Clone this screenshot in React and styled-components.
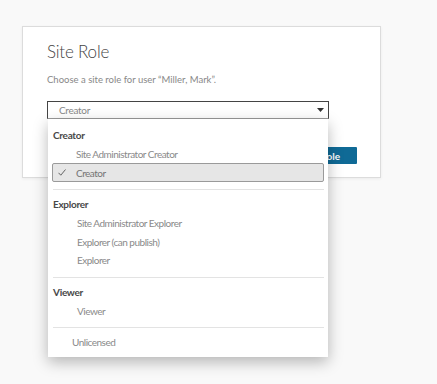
import React from "react";
import styled, { createGlobalStyle } from "styled-components";

const Global = createGlobalStyle`
  html, body { margin: 0; padding: 0; background: #f9f9f9; }
  body { font-family: "Lato", "Noto Sans", sans-serif; }
`;

const Page = styled.div`
  width: 437px;
  height: 384px;
  padding: 26px 0 0 22px;
  box-sizing: border-box;
  background: #f9f9f9;
`;

const Card = styled.div`
  width: 359px;
  height: 152px;
  box-sizing: border-box;
  background: #fff;
  border: 1px solid #dcdcdc;
  box-shadow: 0 1px 3px rgba(0, 0, 0, 0.06);
  padding: 15px 23px 0 24px;
  display: flex;
  flex-direction: column;
`;

const Title = styled.h1`
  margin: 0;
  font-size: 17px;
  line-height: 20px;
  font-weight: 300;
  color: #444;
  letter-spacing: -0.2px;
`;

const Subtitle = styled.p`
  margin: 12px 0 0;
  font-size: 9.5px;
  line-height: 12px;
  color: #888;
`;

const SelectWrap = styled.div`
  position: relative;
  margin-top: 15px;
  width: 282px;
`;

const SelectBox = styled.div`
  height: 18px;
  box-sizing: border-box;
  border: 1px solid #444;
  border-bottom-color: #999;
  display: flex;
  align-items: center;
  justify-content: space-between;
  padding: 0 4px 0 11px;
  font-size: 10px;
  letter-spacing: -0.3px;
  color: #888;
`;

const Menu = styled.div`
  position: absolute;
  top: 100%;
  left: 1px;
  right: 1px;
  background: #fff;
  box-shadow: 0 5px 14px rgba(0, 0, 0, 0.28);
  padding: 7px 4px 5.5px;
  z-index: 2;
`;

const Header = styled.div`
  height: 18.7px;
  display: flex;
  align-items: center;
  padding-left: 1px;
  font-size: 10px;
  font-weight: 700;
  letter-spacing: -0.3px;
  color: #484848;
`;

const Item = styled.div`
  height: 18.7px;
  box-sizing: border-box;
  display: flex;
  align-items: center;
  padding-left: ${(p) => p.$indent}px;
  font-size: 10px;
  letter-spacing: -0.5px;
  color: #8a8a8a;
  border-radius: 2px;
  border: 1px solid ${(p) => (p.$selected ? "#9a9a9a" : "transparent")};
  background: ${(p) => (p.$selected ? "#e6e6e6" : "transparent")};
  ${(p) => p.$selected && "height: 19px; color: #747474;"}
`;

const Check = styled.span`
  width: 18px;
  display: inline-flex;
  align-items: center;
  margin-left: -18px;
`;

const Divider = styled.div`
  height: 1px;
  background: #e3e3e3;
  margin: ${(p) => (p.$first ? "6.5px" : "7px")} 0 5px 1px;
`;

const Footer = styled.div`
  margin-top: 28px;
  display: flex;
  justify-content: flex-end;
`;

const Button = styled.button`
  height: 17px;
  border: none;
  border-radius: 1px;
  background: #0f6a96;
  color: #fff;
  font-family: inherit;
  font-size: 10px;
  font-weight: 700;
  padding: 0 17px 0 14px;
`;

const Arrow = () => (
  <svg width="7" height="4" viewBox="0 0 7 4">
    <path d="M0 0 L7 0 L3.5 4 Z" fill="#333" />
  </svg>
);

const CheckIcon = () => (
  <svg width="8" height="7" viewBox="0 0 8 7">
    <path d="M0.5 3.8 L2.8 6.2 L7.5 0.5" fill="none" stroke="#555" strokeWidth="0.9" />
  </svg>
);

export default function App() {
  return (
    <>
      <Global />
      <Page>
        <Card>
          <Title>Site Role</Title>
          <Subtitle>Choose a site role for user “Miller, Mark”.</Subtitle>
          <SelectWrap>
            <SelectBox>
              <span>Creator</span>
              <Arrow />
            </SelectBox>
            <Menu>
              <Header>Creator</Header>
              <Item $indent={23}>Site Administrator Creator</Item>
              <Item $indent={23} $selected>
                <Check>
                  <CheckIcon />
                </Check>
                Creator
              </Item>
              <Divider $first />
              <Header>Explorer</Header>
              <Item $indent={24}>Site Administrator Explorer</Item>
              <Item $indent={24}>Explorer (can publish)</Item>
              <Item $indent={24}>Explorer</Item>
              <Divider />
              <Header>Viewer</Header>
              <Item $indent={24}>Viewer</Item>
              <Divider />
              <Item $indent={19}>Unlicensed</Item>
            </Menu>
          </SelectWrap>
          <Footer>
            <Button>Change Site Role</Button>
          </Footer>
        </Card>
      </Page>
    </>
  );
}
